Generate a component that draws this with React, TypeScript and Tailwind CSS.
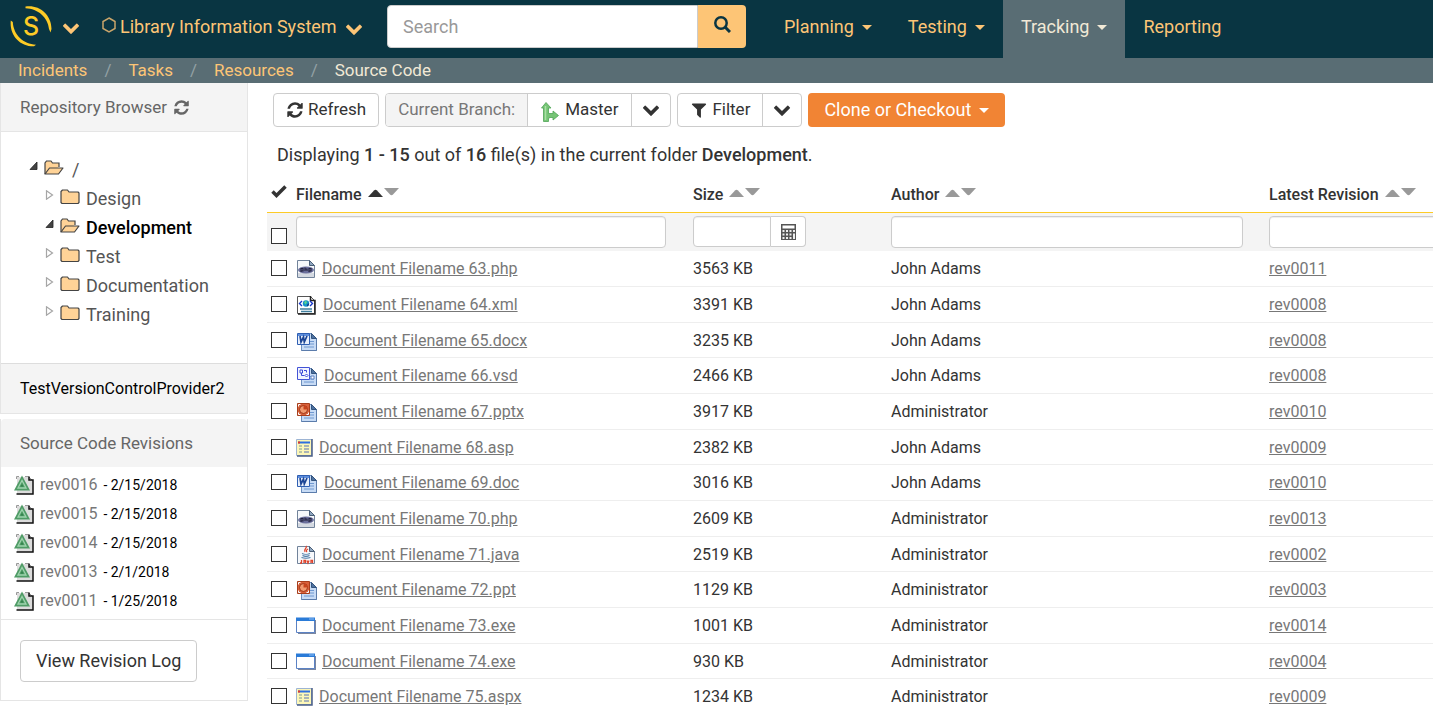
import type { ReactNode } from 'react';

type FileKind = 'php' | 'xml' | 'word' | 'visio' | 'ppt' | 'asp' | 'java' | 'exe';

const files: { name: string; kind: FileKind; size: string; author: string; rev: string }[] = [
  { name: 'Document Filename 63.php', kind: 'php', size: '3563 KB', author: 'John Adams', rev: 'rev0011' },
  { name: 'Document Filename 64.xml', kind: 'xml', size: '3391 KB', author: 'John Adams', rev: 'rev0008' },
  { name: 'Document Filename 65.docx', kind: 'word', size: '3235 KB', author: 'John Adams', rev: 'rev0008' },
  { name: 'Document Filename 66.vsd', kind: 'visio', size: '2466 KB', author: 'John Adams', rev: 'rev0008' },
  { name: 'Document Filename 67.pptx', kind: 'ppt', size: '3917 KB', author: 'Administrator', rev: 'rev0010' },
  { name: 'Document Filename 68.asp', kind: 'asp', size: '2382 KB', author: 'John Adams', rev: 'rev0009' },
  { name: 'Document Filename 69.doc', kind: 'word', size: '3016 KB', author: 'John Adams', rev: 'rev0010' },
  { name: 'Document Filename 70.php', kind: 'php', size: '2609 KB', author: 'Administrator', rev: 'rev0013' },
  { name: 'Document Filename 71.java', kind: 'java', size: '2519 KB', author: 'Administrator', rev: 'rev0002' },
  { name: 'Document Filename 72.ppt', kind: 'ppt', size: '1129 KB', author: 'Administrator', rev: 'rev0003' },
  { name: 'Document Filename 73.exe', kind: 'exe', size: '1001 KB', author: 'Administrator', rev: 'rev0014' },
  { name: 'Document Filename 74.exe', kind: 'exe', size: '930 KB', author: 'Administrator', rev: 'rev0004' },
  { name: 'Document Filename 75.aspx', kind: 'asp', size: '1234 KB', author: 'Administrator', rev: 'rev0009' },
];

const folders = [
  { name: 'Design', open: false },
  { name: 'Development', open: true },
  { name: 'Test', open: false },
  { name: 'Documentation', open: false },
  { name: 'Training', open: false },
];

const revisions = [
  { rev: 'rev0016', date: '2/15/2018' },
  { rev: 'rev0015', date: '2/15/2018' },
  { rev: 'rev0014', date: '2/15/2018' },
  { rev: 'rev0013', date: '2/1/2018' },
  { rev: 'rev0011', date: '1/25/2018' },
];

const glyphs = {
  chevron:
    'M1683 728l-742 741q-19 19-45 19t-45-19l-742-741q-19-19-19-45.5t19-45.5l166-165q19-19 45-19t45 19l531 531 531-531q19-19 45-19t45 19l166 165q19 19 19 45.5t-19 45.5z',
  refresh:
    'M1639 1056q0 5-1 7-64 268-268 434.5t-478 166.5q-146 0-282.5-55t-243.5-157l-129 129q-19 19-45 19t-45-19-19-45v-448q0-26 19-45t45-19h448q26 0 45 19t19 45-19 45l-137 137q71 66 161 102t187 36q134 0 250-65t186-179q11-17 53-117 8-23 30-23h192q13 0 22.5 9.5t9.5 22.5zm25-800v448q0 26-19 45t-45 19h-448q-26 0-45-19t-19-45 19-45l138-138q-148-137-349-137-134 0-250 65t-186 179q-11 17-53 117-8 23-30 23h-199q-13 0-22.5-9.5t-9.5-22.5v-7q65-268 270-434.5t480-166.5q146 0 284 55.5t245 156.5l130-129q19-19 45-19t45 19 19 45z',
  filter:
    'M1595 295q17 41-14 70l-493 493v742q0 42-39 59-13 5-25 5-27 0-45-19l-256-256q-19-19-19-45v-486l-493-493q-31-29-14-70 17-39 59-39h1280q42 0 59 39z',
};

const Glyph = ({ name, className }: { name: keyof typeof glyphs; className: string }) => (
  <svg viewBox="0 0 1792 1792" fill="currentColor" className={`shrink-0 ${className}`} aria-hidden="true">
    <path d={glyphs[name]} />
  </svg>
);

const Caret = () => (
  <svg viewBox="0 0 10 5" fill="currentColor" className="w-2.5 h-[5px] mt-0.5 shrink-0" aria-hidden="true">
    <path d="M0 0h10L5 5z" />
  </svg>
);

const Logo = () => (
  <svg viewBox="0 0 42 42" className="size-[42px] shrink-0" aria-hidden="true">
    <path d="M15.500 1.500C28 -.8 41.500 8.500 41.500 24l-1 3.500-1.500-3.500C38 12.500 28 3.500 15.500 3.200z" fill="#fdcb26" />
    <path d="M2.800 17L.8 15.500C-.8 29 9 41.500 24 41.300l2-1.500C13.500 39 3.500 30 2.800 17z" fill="#fdcb26" />
    <text x="21" y="30" textAnchor="middle" fontFamily="Inter, sans-serif" fontSize="25" fontWeight="500" fill="#fdcb26">
      S
    </text>
  </svg>
);

const Folder = ({ open }: { open: boolean }) =>
  open ? (
    <svg viewBox="0 0 20 16" className="w-5 h-4 mb-0.5 shrink-0" aria-hidden="true">
      <path d="M1 14V3l1.500-2h4.500l1.500 2h6.500v4" fill="#ffd397" stroke="#444" strokeWidth="1.200" />
      <path d="M1 14l4.500-6h13.500L14.500 14z" fill="#ffd397" stroke="#444" strokeWidth="1.200" strokeLinejoin="round" />
    </svg>
  ) : (
    <svg viewBox="0 0 20 16" className="w-5 h-4 mb-0.5 shrink-0" aria-hidden="true">
      <path d="M1 13.500V2.500L2.500 1h5L9 3h9l1 1v9.500l-1 1H2z" fill="#ffd397" stroke="#444" strokeWidth="1.200" strokeLinejoin="round" />
    </svg>
  );

const Expander = ({ open }: { open: boolean }) => (
  <svg viewBox="0 0 9 10" className="w-[9px] h-2.5 mb-1.5 shrink-0" aria-hidden="true">
    {open ? (
      <path d="M8 1v7.500H1z" fill="#444" stroke="#222" strokeWidth=".8" />
    ) : (
      <path d="M1.500 .8v8.400L7.500 5z" fill="#fff" stroke="#a6a6a6" strokeWidth="1.200" />
    )}
  </svg>
);

const RevisionIcon = () => (
  <svg viewBox="0 0 20 20" className="size-5 shrink-0" aria-hidden="true">
    <path d="M3 2h12l4 4v13H3z" fill="#dcdcdc" />
    <path d="M2.500 4V1.500H5M11 1.500h3.500L18 5" fill="none" stroke="#999" />
    <path d="M15 1.500V5h4v14H2.500" fill="none" stroke="#111" strokeWidth="1.500" />
    <path d="M8 .5L0 15.500h16z" fill="#4f9c66" />
    <path d="M8 5.500l-4 7.500h8z" fill="none" stroke="#9fd3ae" strokeWidth="1.300" />
    <path d="M8 9l-1.300 2.500h2.600z" fill="#2f7d49" />
  </svg>
);

const BranchIcon = () => (
  <svg viewBox="0 0 18 20" className="w-[18px] h-5 mt-1 shrink-0" aria-hidden="true">
    <path
      d="M5 .5l5 5.500H7.500v5.500H12V9l5.500 4.500L12 18v-2.500H9q-1.500 0-1.500 1.500v2.500h-5V6H.5z"
      fill="#76c476"
      stroke="#4fa455"
      strokeWidth=".8"
    />
    <path d="M4.500 4v14" stroke="#a9e0a4" strokeWidth="1.500" />
  </svg>
);

const Page = ({ children }: { children?: ReactNode }) => (
  <>
    <path d="M1.500 1.500h12l5 5v12h-17z" fill="#f6f8fb" stroke="#71839a" />
    <path d="M13.500 1.500v5h5z" fill="#8fa6bf" stroke="#4a5f78" />
    {children}
  </>
);

const OfficePage = () => (
  <>
    <path d="M5.500 2.500h10l5 5v12h-15z" fill="#c7dbf5" stroke="#6c8fbf" />
    <path d="M15.500 2.500v5h5z" fill="#4d719f" stroke="#33547f" />
    <path d="M20.500 8v11.500H5.500" fill="none" stroke="#5b7cab" />
    <path d="M14 10.500h4M14 13h4M8 16h10" stroke="#6f98d0" />
  </>
);

const fileArt: Record<FileKind, { width: number; art: ReactNode }> = {
  php: {
    width: 20,
    art: (
      <Page>
        <path d="M2 14h16v4H2z" fill="#d5dae2" />
        <ellipse cx="10" cy="11" rx="8" ry="3.500" fill="#6b6f9c" />
        <path d="M5 13v-3.500h2V12H5M9 8.500V12m0-2h2v2M13 13V9.500h2V12h-2" fill="none" stroke="#23233f" strokeWidth="1.100" />
      </Page>
    ),
  },
  xml: {
    width: 21,
    art: (
      <>
        <path d="M1.500 1.500h13l4 4v13h-17z" fill="#fff" stroke="#555" />
        <path d="M14.500 1v4.500H19V19H2" fill="none" stroke="#222" strokeWidth="1.500" />
        <path d="M6 6L3.500 8.500 6 11M14 6l2.500 2.500L14 11" fill="none" stroke="#1737c9" strokeWidth="1.400" />
        <circle cx="10" cy="8.500" r="3.200" fill="#1593c7" />
        <path d="M8 7.500l2-2 1 2-1.500 2z" fill="#57d68d" />
        <path d="M11 10l1.500-2 .5 2-2 1.500z" fill="#123a86" />
        <path d="M4 14h12M5 16.500h11" stroke="#3f7f9e" strokeWidth="1.300" />
      </>
    ),
  },
  word: {
    width: 22,
    art: (
      <>
        <OfficePage />
        <path d="M1.500 2.500h12v11h-12z" fill="#e9f0fb" stroke="#2f5fb3" />
        <path d="M2 3h11v2H2z" fill="#5f8fdd" />
        <path d="M4 5l1 6 2.500-5 .8 5L11 5" fill="none" stroke="#1c4595" strokeWidth="1.700" />
      </>
    ),
  },
  visio: {
    width: 22,
    art: (
      <>
        <OfficePage />
        <path d="M1.500 1.500h12v12h-12z" fill="#f2f4ff" stroke="#4353d6" />
        <path d="M4 4h2.500v3H4zM9 9.500L10.500 8 12 9.500 10.500 11z" fill="#fff" stroke="#3b49d8" />
        <path d="M5.500 7v2.500h3M8 4.500h2.500v2" fill="none" stroke="#3b49d8" />
        <path d="M15 10h3v3h-3z" fill="#fff" stroke="#5f83c4" />
      </>
    ),
  },
  ppt: {
    width: 22,
    art: (
      <>
        <OfficePage />
        <path d="M1.500 1.500h12v12h-12z" fill="#d9603a" stroke="#a63e1d" />
        <circle cx="7.500" cy="7.500" r="4" fill="#f09a70" stroke="#9c3516" />
        <path d="M7.500 7.500v-4a4 4 0 0 1 4 4z" fill="#c7431c" />
        <path d="M2.500 4.500v-2h2M10.500 12.500h2v-2M2.500 10.500v2h2" fill="none" stroke="#fff" />
      </>
    ),
  },
  asp: {
    width: 17,
    art: (
      <>
        <path d="M.5 1.500h15v16H.5z" fill="#fdf7b8" stroke="#9db4d4" />
        <path d="M16 1v17H1" fill="none" stroke="#4b5f86" strokeWidth="1.500" />
        <path d="M2 4.500h12" stroke="#2f6fe0" strokeWidth="2" />
        <path d="M2 4.500h2" stroke="#e23a2a" strokeWidth="2" />
        <path d="M3 8h3M3 11h3M3 14h3" stroke="#7d9a95" strokeWidth="1.200" />
        <path d="M8 8h5M8 11h5M8 14h5" stroke="#5872b5" strokeWidth="1.200" />
      </>
    ),
  },
  java: {
    width: 20,
    art: (
      <Page>
        <path d="M10 1c2 2-3 3-1 6M12 4c-2 1-2 2-1 3" fill="none" stroke="#e0432c" strokeWidth="1.300" />
        <path d="M6 8.500c2 1 6 1 8 0M6.500 10.500c2 1 5 1 7 0M5.500 12.500c3 1 6 1 9 0" fill="none" stroke="#4c7ba8" strokeWidth="1.200" />
        <path d="M4 18h1.500v-3M8 18v-2.500h1.500V18M11 15.500l1 2.500 1-2.500M15 18v-2.500h1.500V18" fill="none" stroke="#e0432c" strokeWidth="1.300" />
      </Page>
    ),
  },
  exe: {
    width: 20,
    art: (
      <>
        <path d="M2 4h18v14H2z" fill="#7a86a0" />
        <path d="M.5 3.500h18v13H.5z" fill="#fff" stroke="#5b82c4" />
        <path d="M0 1.500h19V5H0z" fill="#2a7bd8" />
        <path d="M13 3h5" stroke="#8fc0f5" />
      </>
    ),
  },
};

const FileIcon = ({ kind }: { kind: FileKind }) => (
  <svg width={fileArt[kind].width} height="20" className="shrink-0" aria-hidden="true">
    {fileArt[kind].art}
  </svg>
);

const SortHeader = ({ label, active }: { label: string; active?: boolean }) => (
  <th scope="col" className="pt-1 border-b border-[#fdcb26] text-left font-medium">
    <button type="button" className="flex items-center gap-1.5">
      {label}
      <svg viewBox="0 0 31 10" className="w-[31px] h-2.5 mb-1" aria-hidden="true">
        <path d="M0 9l6-6.500q1.500-1.500 3 0L15 9z" fill={active ? '#333' : '#999'} />
        <path d="M16 0h15l-6 6.500q-1.500 1.500-3 0z" fill="#999" />
      </svg>
    </button>
  </th>
);

const Checkbox = ({ label }: { label: string }) => (
  <input
    type="checkbox"
    aria-label={label}
    className="block appearance-none size-4 ml-1 border border-[#333] bg-white checked:bg-[#333]"
  />
);

const Header = () => {
  const item = 'flex items-center gap-2 px-[18px] pb-1';
  return (
    <header className="flex h-[58px] bg-[#093542] text-[#fdc576] text-lg">
      <div className="flex items-center shrink-0 w-[387px] pl-2.5">
        <button type="button" aria-label="Workspaces" className="flex items-center gap-2.5 pb-1.5">
          <Logo />
          <Glyph name="chevron" className="size-[18px] mt-1" />
        </button>
        <button type="button" className="flex items-center ml-[22px] pb-1">
          <svg viewBox="0 0 14 16" className="w-3.5 h-4 mr-1 mb-1" fill="none" stroke="#c9a56b" strokeWidth="1.500" aria-hidden="true">
            <path d="M7 1l6 3.500v7L7 15l-6-3.500v-7z" />
          </svg>
          Library Information System
          <Glyph name="chevron" className="size-[18px] ml-2 mt-1" />
        </button>
      </div>
      <form className="flex h-[43px] mt-[5px] mr-5 w-[359px] shrink-0">
        <input
          type="search"
          placeholder="Search"
          aria-label="Search"
          className="grow min-w-0 px-[15px] bg-white rounded-l border border-[#ccc] text-[#333] placeholder:text-[#999]"
        />
        <button type="button" aria-label="Run search" className="flex justify-center items-center w-12 pb-1 bg-[#fdc576] rounded-r">
          <svg viewBox="0 0 17 17" className="size-[17px]" fill="none" stroke="#093542" strokeWidth="2.500" aria-hidden="true">
            <circle cx="7" cy="7" r="5.700" />
            <path d="M11 11l5 5" strokeWidth="3" />
          </svg>
        </button>
      </form>
      <nav className="flex">
        <button type="button" className={item}>
          Planning <Caret />
        </button>
        <button type="button" className={item}>
          Testing <Caret />
        </button>
        <button type="button" className={`${item} bg-[#596d74] text-[#f1e9d6]`}>
          Tracking <Caret />
        </button>
        <a href="#reporting" className={item}>
          Reporting
        </a>
      </nav>
    </header>
  );
};

const Breadcrumbs = () => (
  <nav aria-label="Tracking" className="flex items-center h-[25px] pt-0.5 px-[18px] bg-[#596d74] text-[#fdc576] text-[17px]">
    <a href="#incidents">Incidents</a>
    <span className="px-[17px] text-[#93a1a5]">/</span>
    <a href="#tasks">Tasks</a>
    <span className="px-[17px] text-[#93a1a5]">/</span>
    <a href="#resources">Resources</a>
    <span className="px-[17px] text-[#93a1a5]">/</span>
    <span className="text-[#f1e9d6]">Source Code</span>
  </nav>
);

const Sidebar = () => (
  <aside className="w-[248px] shrink-0">
    <section className="border-x border-b border-[#e5e5e5]">
      <h2 className="flex items-center gap-1.5 h-[49px] pt-0.5 px-[19px] bg-[#f4f4f4] border-b border-[#e5e5e5] text-[17px] text-[#666]">
        Repository Browser
        <button type="button" aria-label="Reload folders">
          <Glyph name="refresh" className="size-[17px]" />
        </button>
      </h2>
      <ul className="pt-[23px] pb-[34px] text-lg leading-[29px] text-[#555]">
        <li className="flex items-center gap-1.5 h-[29px] pl-7">
          <Expander open />
          <Folder open />
          <a href="#root" className="pl-0.5">/</a>
        </li>
        {folders.map((folder) => (
          <li key={folder.name} className="flex items-center gap-1.5 h-[29px] pl-11">
            <Expander open={folder.open} />
            <Folder open={folder.open} />
            <a href="#folder" className={folder.open ? 'font-medium text-black' : ''}>
              {folder.name}
            </a>
          </li>
        ))}
      </ul>
      <p className="flex items-center h-[50px] pt-0.5 px-[19px] bg-[#f4f4f4] border-t border-[#ddd] text-base text-black">
        TestVersionControlProvider2
      </p>
    </section>

    <section className="mt-[5px] border-x border-b border-[#e5e5e5]">
      <h2 className="flex items-center h-12 pt-0.5 px-[19px] bg-[#f4f4f4] rounded-t text-[17px] text-[#666]">
        Source Code Revisions
      </h2>
      <ul className="pt-1 pb-[3px]">
        {revisions.map(({ rev, date }) => (
          <li key={rev} className="flex items-center h-[29px] pl-[13px] text-sm text-black">
            <RevisionIcon />
            <a href="#revision" className="ml-1.5 mr-1.5 text-base text-[#777]">
              {rev}
            </a>
            - {date}
          </li>
        ))}
      </ul>
      <div className="px-[19px] pt-5 pb-[18px] border-t border-[#e5e5e5]">
        <button type="button" className="h-[42px] px-[15px] bg-white border border-[#ccc] rounded text-lg text-[#333]">
          View Revision Log
        </button>
      </div>
    </section>
  </aside>
);

const Toolbar = () => (
  <div className="flex gap-1.5 h-[34px] pl-1.5 text-[17px] text-[#333]">
    <button type="button" className="flex items-center gap-1 px-3 border border-[#ccc] rounded">
      <Glyph name="refresh" className="size-[18px]" />
      Refresh
    </button>
    <div className="flex border border-[#ccc] rounded overflow-hidden">
      <span className="flex items-center px-3 bg-[#f4f4f4] text-[#777]">Current Branch:</span>
      <button type="button" className="flex items-center gap-1.5 px-[13px] border-l border-[#ccc]">
        <BranchIcon />
        Master
      </button>
      <button type="button" aria-label="Choose branch" className="flex items-center px-2.5 border-l border-[#ccc]">
        <Glyph name="chevron" className="size-[18px]" />
      </button>
    </div>
    <div className="flex border border-[#ccc] rounded">
      <button type="button" className="flex items-center gap-1 px-3">
        <Glyph name="filter" className="size-[18px]" />
        Filter
      </button>
      <button type="button" aria-label="Filter options" className="flex items-center px-2.5 border-l border-[#ccc]">
        <Glyph name="chevron" className="size-[18px]" />
      </button>
    </div>
    <button type="button" className="flex items-center gap-2 px-4 bg-[#f18434] rounded text-lg text-white">
      Clone or Checkout <Caret />
    </button>
  </div>
);

const FileTable = () => {
  const field = 'block h-8 bg-white border border-[#ccc] rounded px-2 shadow-[inset_0_1px_1px_rgba(0,0,0,0.075)]';
  return (
    <div className="overflow-x-hidden mt-2">
      <table className="w-[1380px] table-fixed border-separate border-spacing-0 text-base text-[#333]">
        <colgroup>
          <col className="w-[29px]" />
          <col className="w-[397px]" />
          <col className="w-[198px]" />
          <col className="w-[378px]" />
          <col />
        </colgroup>
        <thead>
          <tr className="h-[38px]">
            <th scope="col" className="border-b border-[#fdcb26]">
              <svg viewBox="0 0 16 13" className="w-4 h-[13px] ml-1 mb-1" fill="none" stroke="#333" strokeWidth="3.500" aria-label="Selected">
                <path d="M1.500 6.500l4 4 9-9" />
              </svg>
            </th>
            <SortHeader label="Filename" active />
            <SortHeader label="Size" />
            <SortHeader label="Author" />
            <SortHeader label="Latest Revision" />
          </tr>
          <tr className="h-[38px] bg-[#f4f4f4]">
            <td className="pt-2">
              <Checkbox label="Select all files" />
            </td>
            <td>
              <input type="text" aria-label="Filter by filename" className={`${field} w-[370px]`} />
            </td>
            <td>
              <div className="flex">
                <input
                  type="text"
                  aria-label="Filter by size"
                  className="w-[78px] h-[31px] px-2 bg-white border border-[#ccc] rounded-l shadow-[inset_0_1px_1px_rgba(0,0,0,0.075)]"
                />
                <button
                  type="button"
                  aria-label="Size range"
                  className="flex items-center justify-center w-[35px] bg-white border border-l-0 border-[#ccc] rounded-r"
                >
                  <svg viewBox="0 0 15 16" className="w-[15px] h-4" aria-hidden="true">
                    <path d="M0 0h15v16H0z" fill="#555" />
                    <path d="M1.500 1.500h12v3h-12z" fill="#fff" />
                    <path
                      d="M1.500 6h2v2h-2zM5 6h2v2H5zM8.500 6h2v2h-2zM12 6h2v2h-2zM1.500 9.500h2v2h-2zM5 9.500h2v2H5zM8.500 9.500h2v2h-2zM1.500 13h2v2h-2zM5 13h2v2H5zM8.500 13h2v2h-2zM12 9.500h2V15h-2z"
                      fill="#eee"
                    />
                  </svg>
                </button>
              </div>
            </td>
            <td>
              <input type="text" aria-label="Filter by author" className={`${field} w-[352px]`} />
            </td>
            <td>
              <input type="text" aria-label="Filter by revision" className={`${field} w-[352px]`} />
            </td>
          </tr>
        </thead>
        <tbody className="[&_td]:border-b [&_td]:border-[#eee]">
          {files.map((file) => (
            <tr key={file.name} className="h-9 nth-[3n]:h-[35px]">
              <td>
                <Checkbox label={`Select ${file.name}`} />
              </td>
              <td className="pt-0.5">
                <div className="flex items-center gap-1.5">
                  <FileIcon kind={file.kind} />
                  <a href="#file" className="text-[#777] underline">
                    {file.name}
                  </a>
                </div>
              </td>
              <td className="pt-0.5">{file.size}</td>
              <td className="pt-0.5">{file.author}</td>
              <td className="pt-0.5">
                <a href="#revision" className="text-[#777] underline">
                  {file.rev}
                </a>
              </td>
            </tr>
          ))}
        </tbody>
      </table>
    </div>
  );
};

const App = () => {
  return (
    <div className="h-screen flex flex-col overflow-hidden bg-white font-['Roboto',sans-serif]">
      <Header />
      <Breadcrumbs />
      <div className="flex grow min-h-0">
        <Sidebar />
        <main className="grow min-w-0 pt-2.5 pl-[19px] overflow-hidden">
          <Toolbar />
          <p className="mt-4 pl-2.5 text-lg leading-6 text-[#333]">
            Displaying <b className="font-medium">1 - 15</b> out of <b className="font-medium">16</b> file(s) in the current folder{' '}
            <b className="font-medium">Development</b>.
          </p>
          <FileTable />
        </main>
      </div>
    </div>
  );
};

export default App;
